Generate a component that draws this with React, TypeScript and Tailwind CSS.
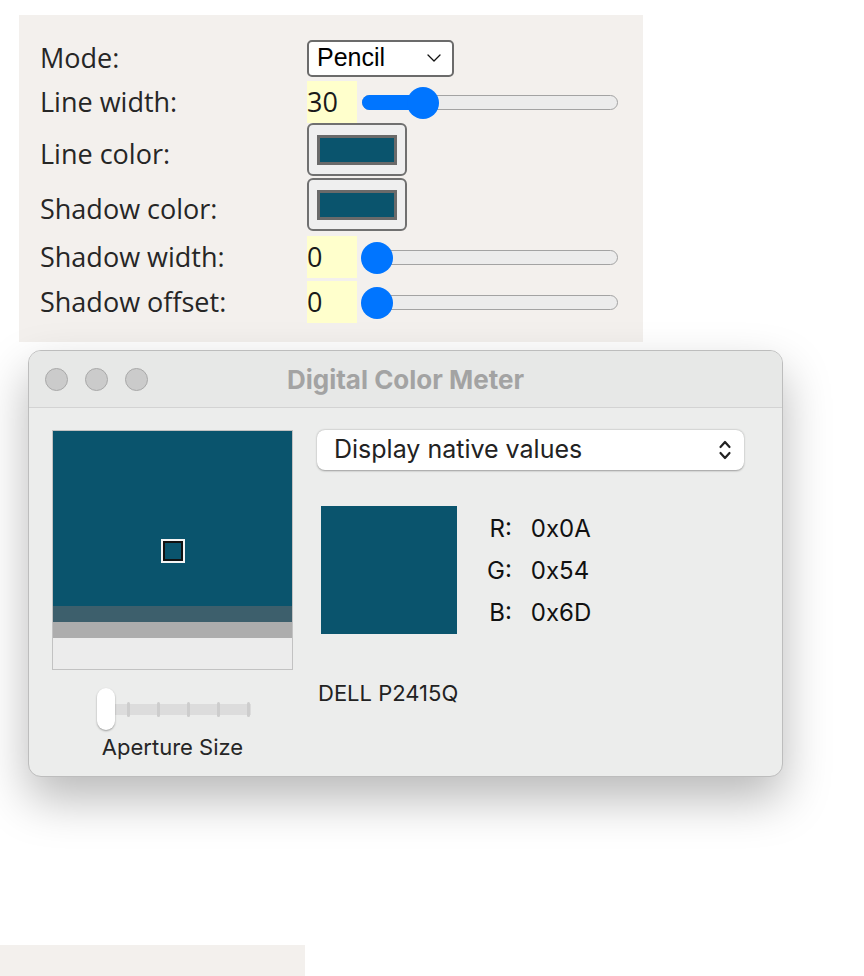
import React from 'react';

const TEAL = '#0a546d';

const Label = ({ children, low }: { children: React.ReactNode; low?: boolean }) => (
  <div className={`w-[267px] shrink-0 text-[27px] text-[#262626] ${low ? 'pt-[10px]' : ''}`}>{children}</div>
);

const NumberBox = ({ value }: { value: string }) => (
  <div className="flex h-[42px] w-[50px] shrink-0 items-center bg-[#ffffcc] text-[27px] text-[#1a1a1a]">
    {value}
  </div>
);

// thumb: centre of the thumb in px from the left of the track
const Range = ({ thumb }: { thumb: number }) => (
  <div className="relative ml-[5px] h-[15px] w-[256px] rounded-full border border-[#a3a3a3] bg-[#ececec]">
    <div className="absolute left-[-1px] top-[-1px] h-[15px] rounded-full bg-[#0075ff]" style={{ width: thumb + 1 }} />
    <div className="absolute top-[-9px] h-[32px] w-[32px] rounded-full bg-[#0075ff]" style={{ left: thumb - 16 }} />
  </div>
);

const ColorButton = () => (
  <div className="flex h-[53px] w-[100px] items-center justify-center rounded-[6px] border-2 border-[#707070] bg-[#efefef]">
    <div className="h-[30px] w-[80px] border-[3px] border-[#6a6a6a]" style={{ backgroundColor: TEAL }} />
  </div>
);

const Light = () => <div className="h-[23px] w-[23px] rounded-full border border-[#a9a9a9] bg-[#cbcbcb]" />;

const UpDown = () => (
  <svg width="14" height="22" viewBox="0 0 14 22" fill="none" stroke="#222" strokeWidth="2.2" strokeLinecap="round" strokeLinejoin="round">
    <path d="M2.5 8 L7 3 L11.5 8" />
    <path d="M2.5 14 L7 19 L11.5 14" />
  </svg>
);

export default function App() {
  return (
    <div className="h-[976px] w-[864px] overflow-hidden bg-white" style={{ fontFamily: '"Open Sans", "Noto Sans", sans-serif' }}>
      {/* settings panel */}
      <div className="ml-[19px] mt-[15px] h-[327px] w-[624px] bg-[#f3f0ed] pl-[21px] pt-[25px]">
        <div className="flex h-[36px] items-center">
          <Label>Mode:</Label>
          <div
            className="flex h-[37px] w-[147px] items-center justify-between rounded-[5px] border-2 border-[#6b6b6b] bg-white pl-[8px] pr-[10px] text-[25px] text-black"
            style={{ fontFamily: '"Liberation Sans", Arial, sans-serif' }}
          >
            <span>Pencil</span>
            <svg width="16" height="10" viewBox="0 0 16 10" fill="none" stroke="#111" strokeWidth="1.3" strokeLinecap="round" strokeLinejoin="round">
              <path d="M2 2 L8 8 L14 2" />
            </svg>
          </div>
        </div>
        <div className="mt-[5px] flex h-[42px] items-center">
          <Label>Line width:</Label>
          <NumberBox value="30" />
          <Range thumb={60} />
        </div>
        <div className="flex h-[53px] items-center">
          <Label low>Line color:</Label>
          <ColorButton />
        </div>
        <div className="mt-[2px] flex h-[53px] items-center">
          <Label low>Shadow color:</Label>
          <ColorButton />
        </div>
        <div className="mt-[5px] flex h-[42px] items-center">
          <Label>Shadow width:</Label>
          <NumberBox value="0" />
          <Range thumb={14} />
        </div>
        <div className="mt-[3px] flex h-[42px] items-center">
          <Label>Shadow offset:</Label>
          <NumberBox value="0" />
          <Range thumb={14} />
        </div>
      </div>

      {/* Digital Color Meter window */}
      <div
        className="ml-[28px] mt-[8px] h-[427px] w-[755px] overflow-hidden rounded-[13px] border border-[#bdbdbd] bg-[#ecedec] shadow-[0_22px_48px_rgba(0,0,0,0.28)]"
        style={{ fontFamily: 'Inter, "Liberation Sans", sans-serif' }}
      >
        <div className="grid h-[57px] grid-cols-[1fr_auto_1fr] items-center border-b border-[#d3d3d3] bg-[#e7e8e7] px-[16px]">
          <div className="flex gap-[17px]">
            <Light />
            <Light />
            <Light />
          </div>
          <div className="text-[26px] font-bold text-[#a3a3a3]">Digital Color Meter</div>
          <div />
        </div>

        <div className="flex pl-[23px] pt-[22px]">
          {/* magnifier */}
          <div className="flex w-[241px] flex-col items-center">
            <div className="flex h-[240px] w-[241px] flex-col border border-[#c2c2c2]">
              <div className="flex h-[175px] items-center justify-center" style={{ backgroundColor: TEAL }}>
                <div className="mt-[64px] h-[24px] w-[24px] border-2 border-[#f4f4f4]">
                  <div className="h-full w-full border-2 border-[#111]" style={{ backgroundColor: TEAL }} />
                </div>
              </div>
              <div className="h-[16px] bg-[#3d5f6c]" />
              <div className="h-[16px] bg-[#adadad]" />
              <div className="flex-1 bg-[#ececec]" />
            </div>

            <div className="relative ml-[2px] mt-[18px] flex h-[42px] w-[154px] items-center">
              <div className="flex h-[11px] w-full items-center justify-between bg-[#dcdcdc] pl-[30px] pr-[1px]">
                <div className="h-[15px] w-[3px] rounded-full bg-[#cdcdcd]" />
                <div className="h-[15px] w-[3px] rounded-full bg-[#cdcdcd]" />
                <div className="h-[15px] w-[3px] rounded-full bg-[#cdcdcd]" />
                <div className="h-[15px] w-[3px] rounded-full bg-[#cdcdcd]" />
                <div className="h-[15px] w-[3px] rounded-full bg-[#cdcdcd]" />
              </div>
              <div className="absolute left-0 top-0 h-[42px] w-[18px] rounded-full bg-white shadow-[0_1px_2px_rgba(0,0,0,0.35)]" />
            </div>
            <div className="mt-[1px] text-[22px] text-[#262626]">Aperture Size</div>
          </div>

          {/* values */}
          <div className="ml-[24px] flex flex-col">
            <div className="flex h-[40px] w-[427px] items-center justify-between rounded-[8px] bg-white pl-[17px] pr-[12px] text-[25px] text-[#222] shadow-[0_0.5px_2px_rgba(0,0,0,0.35)]">
              <span>Display native values</span>
              <UpDown />
            </div>

            <div className="mt-[36px] flex">
              <div className="ml-[4px] h-[128px] w-[136px]" style={{ backgroundColor: TEAL }} />
              <div className="ml-[30px] mt-[2px] grid grid-cols-[auto_auto] gap-x-[19px] text-[24px] leading-[42px] text-[#111]">
                <span className="text-right">R:</span>
                <span>0x0A</span>
                <span className="text-right">G:</span>
                <span>0x54</span>
                <span className="text-right">B:</span>
                <span>0x6D</span>
              </div>
            </div>

            <div className="ml-[1px] mt-[43px] text-[22px] text-[#222]">DELL P2415Q</div>
          </div>
        </div>
      </div>

      <div className="mt-[168px] h-[31px] w-[305px] bg-[#f3f0ed]" />
    </div>
  );
}
